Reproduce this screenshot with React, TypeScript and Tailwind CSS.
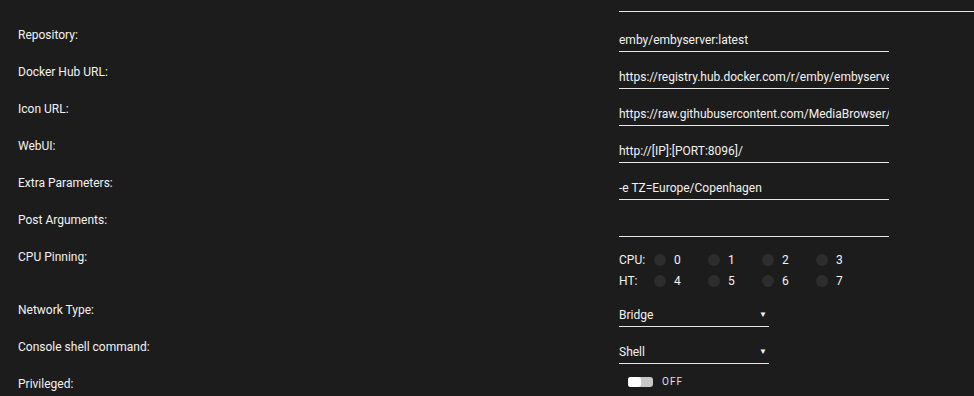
import React from 'react';

const fields = [
  { label: 'Repository:', value: 'emby/embyserver:latest' },
  { label: 'Docker Hub URL:', value: 'https://registry.hub.docker.com/r/emby/embyserver/' },
  { label: 'Icon URL:', value: 'https://raw.githubusercontent.com/MediaBrowser/Emby.Resources/master/images/Logos/logoicon.png' },
  { label: 'WebUI:', value: 'http://[IP]:[PORT:8096]/' },
  { label: 'Extra Parameters:', value: '-e TZ=Europe/Copenhagen' },
  { label: 'Post Arguments:', value: '' },
];

function Label({ children }: { children: React.ReactNode }) {
  return <div className="w-[601px] shrink-0 pt-[12px] leading-4">{children}</div>;
}

function TextRow({ label, value }: { label: string; value: string }) {
  return (
    <div className="flex h-[37px]">
      <Label>{label}</Label>
      <div className="pt-[14px]">
        <div className="w-[270px] h-[23px] border-b border-[#e6e6e6] overflow-hidden whitespace-nowrap leading-[22px]">
          {value}
        </div>
      </div>
    </div>
  );
}

function SelectRow({ label, value }: { label: string; value: string }) {
  return (
    <div className="flex h-[37px]">
      <Label>{label}</Label>
      <div className="pt-[14px]">
        <div className="w-[150px] h-[23px] border-b border-[#e6e6e6] flex items-center justify-between leading-[22px]">
          <span>{value}</span>
          <span className="text-[8px] pr-[2px]">▼</span>
        </div>
      </div>
    </div>
  );
}

function CoreRow({ name, cores }: { name: string; cores: number[] }) {
  return (
    <div className="flex items-center h-[21px]">
      <span className="w-[35px]">{name}</span>
      {cores.map((c) => (
        <div key={c} className="w-[54px] flex items-center">
          <span className="w-3 h-3 rounded-full bg-[#2d2d2d]" />
          <span className="ml-[8px]">{c}</span>
        </div>
      ))}
    </div>
  );
}

export default function App() {
  return (
    <div
      className="w-[974px] h-[396px] overflow-hidden bg-[#1c1c1c] text-[#f2f2f2] text-[12px] pl-[18px]"
      style={{ fontFamily: 'Roboto, "Liberation Sans", Arial, sans-serif' }}
    >
      {/* previous field's underline */}
      <div className="h-[15px] flex">
        <div className="w-[601px] shrink-0" />
        <div className="flex-1 h-[12px] border-b border-[#e6e6e6]" />
      </div>

      {fields.map((f) => (
        <TextRow key={f.label} label={f.label} value={f.value} />
      ))}

      {/* CPU pinning */}
      <div className="flex h-[53px]">
        <Label>CPU Pinning:</Label>
        <div className="pt-[12px]">
          <CoreRow name="CPU:" cores={[0, 1, 2, 3]} />
          <CoreRow name="HT:" cores={[4, 5, 6, 7]} />
        </div>
      </div>

      <SelectRow label="Network Type:" value="Bridge" />
      <SelectRow label="Console shell command:" value="Shell" />

      <div className="flex h-[37px]">
        <Label>Privileged:</Label>
        <div className="pt-[13px] pl-[9px] flex items-start">
          <div className="w-[25px] h-[10px] rounded-[3px] bg-[#c8c8c8] flex">
            <span className="w-[13px] h-[10px] rounded-[3px] bg-white" />
          </div>
          <span className="ml-[9px] text-[10px] leading-[10px] tracking-[1px] text-[#e0e0e0]">OFF</span>
        </div>
      </div>
    </div>
  );
}
